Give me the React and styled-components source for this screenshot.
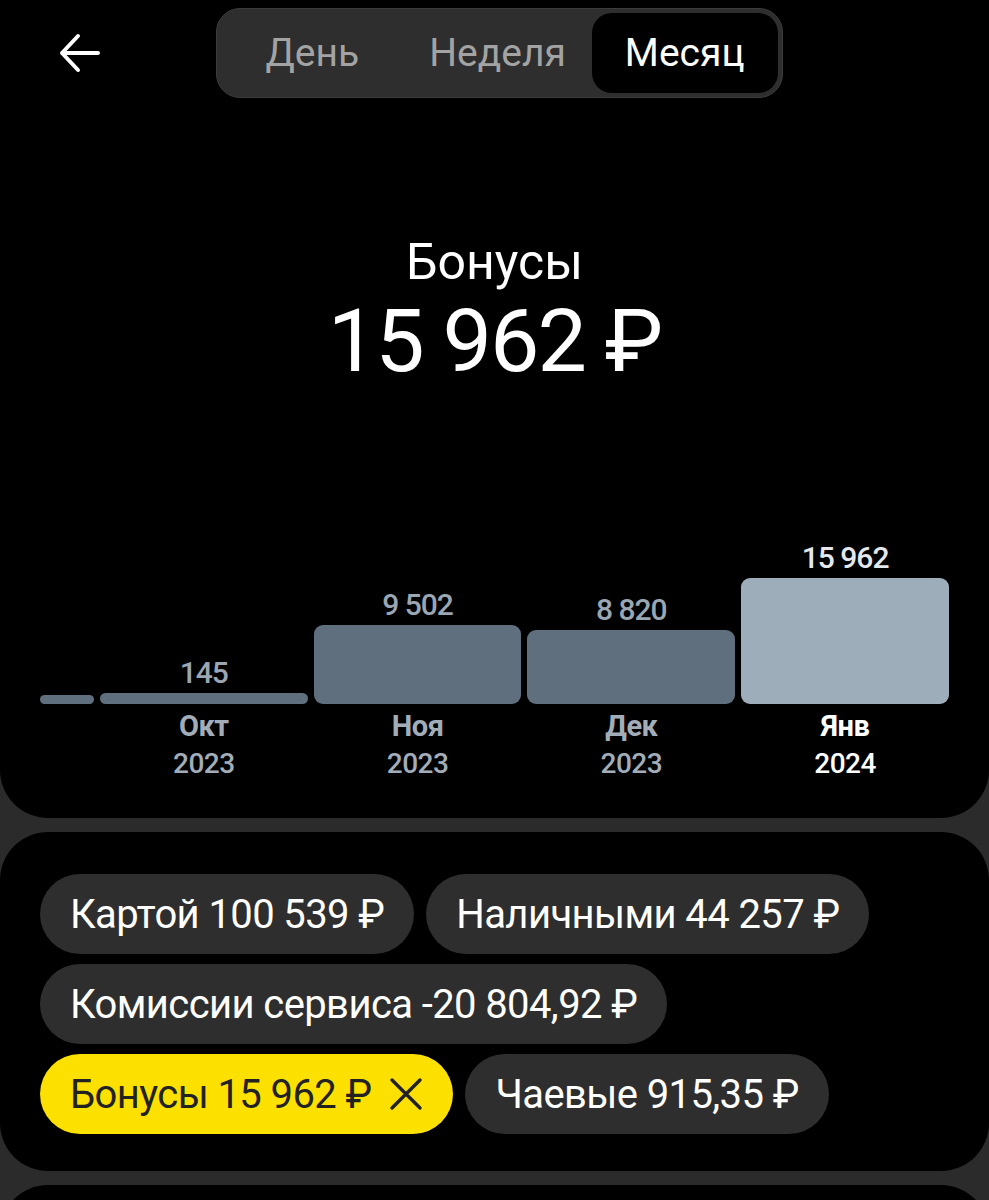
import React from 'react'
import styled, { createGlobalStyle } from 'styled-components'

const GlobalStyle = createGlobalStyle`
    body {
        margin: 0;
        background: #2b2b2b;
        font-family: Roboto, "Noto Sans", "DejaVu Sans", sans-serif;
        color: #fff;
    }
`

const Page = styled.div`
    display: flex;
    flex-direction: column;
    gap: 14px;
    width: 989px;
    height: 1200px;
    overflow: hidden;
`

const TopPanel = styled.section`
    background: #000;
    border-radius: 0 0 48px 48px;
    padding: 8px 40px 38px;
`

const Header = styled.header`
    display: grid;
    grid-template-columns: 1fr auto 1fr;
    align-items: center;
`

const BackButton = styled.button`
    justify-self: start;
    display: flex;
    align-items: center;
    justify-content: center;
    width: 50px;
    height: 50px;
    margin-left: 15px;
    padding: 0;
    background: none;
    border: none;
    color: #fff;
`

const Segmented = styled.div`
    display: flex;
    gap: 4px;
    margin-left: 10px;
    padding: 4px;
    background: #2e2e2e;
    border: 1.5px solid #3c3c3c;
    border-radius: 24px;
`

const Segment = styled.button`
    height: 80px;
    padding: 0 ${p => p.$pad}px;
    border: none;
    border-radius: 20px;
    background: ${p => (p.$active ? '#000' : 'transparent')};
    color: ${p => (p.$active ? '#fff' : '#a3a3a3')};
    font-family: inherit;
    font-size: 39px;
    font-weight: 400;
`

const Summary = styled.div`
    display: flex;
    flex-direction: column;
    align-items: center;
    margin-top: 134px;
`

const SummaryLabel = styled.div`
    font-size: 50px;
    line-height: 60px;
`

const SummaryValue = styled.div`
    font-size: 88px;
    line-height: 97px;
    letter-spacing: -2px;
`

const Chart = styled.div`
    display: flex;
    gap: 6px;
    margin-top: 135px;
`

const Column = styled.div`
    display: flex;
    flex-direction: column;
    align-items: center;
    width: ${p => p.$width}px;
`

const BarArea = styled.div`
    display: flex;
    flex-direction: column;
    justify-content: flex-end;
    align-items: center;
    width: 100%;
    height: 180px;
`

const BarValue = styled.div`
    margin-bottom: 2px;
    font-size: 30px;
    line-height: 36px;
    font-weight: 500;
    letter-spacing: -1px;
    color: ${p => (p.$current ? '#e4e8ec' : '#9aa6b2')};
`

const Bar = styled.div`
    width: 100%;
    border-radius: 9px;
    background: ${p => (p.$current ? '#9eadba' : '#5f6f7e')};
`

const Month = styled.div`
    margin-top: 5px;
    font-size: 29px;
    line-height: 34px;
    font-weight: 700;
    letter-spacing: -0.5px;
    color: ${p => (p.$current ? '#fff' : '#a3adb8')};
`

const Year = styled.div`
    margin-top: 5px;
    font-size: 28px;
    line-height: 32px;
    font-weight: 500;
    letter-spacing: -0.5px;
    color: ${p => (p.$current ? '#fff' : '#a3adb8')};
`

const Panel = styled.section`
    background: #000;
    border-radius: 48px;
    padding: 42px 40px 37px;
`

const ChipList = styled.div`
    display: flex;
    flex-wrap: wrap;
    gap: 10px 12px;
`

const Chip = styled.button`
    display: flex;
    align-items: center;
    gap: 18px;
    height: 80px;
    padding: 0 30px;
    border: none;
    border-radius: 40px;
    background: ${p => (p.$active ? '#fce000' : '#2e2e2e')};
    color: ${p => (p.$active ? '#222' : '#fff')};
    font-family: inherit;
    font-size: 40px;
    font-weight: 400;
    letter-spacing: -0.6px;
    white-space: nowrap;
`

const NextPanel = styled.section`
    background: #000;
    border-radius: 48px 48px 0 0;
    height: 200px;
    flex-shrink: 0;
`

const ArrowLeft = () => (
    <svg width="44" height="40" viewBox="0 0 44 40" fill="none" stroke="currentColor" strokeWidth="4" strokeLinecap="round" strokeLinejoin="round">
        <path d="M40 20H4M20 3L4 20l16 17" />
    </svg>
)

const CloseIcon = () => (
    <svg width="34" height="34" viewBox="0 0 34 34" fill="none" stroke="currentColor" strokeWidth="3.4" strokeLinecap="round">
        <path d="M3 3l28 28M31 3L3 31" />
    </svg>
)

const NB = '\u00A0'

const months = [
    { value: 145, month: 'Окт', year: '2023' },
    { value: 9502, month: 'Ноя', year: '2023' },
    { value: 8820, month: 'Дек', year: '2023' },
    { value: 15962, month: 'Янв', year: '2024', current: true },
]

const formatNumber = (n) => String(n).replace(/\B(?=(\d{3})+(?!\d))/g, NB)

// bar height: small base plus value scale
const barHeight = (v) => 10 + v * 0.00728

const chips = [
    { label: `Картой 100${NB}539${NB}₽` },
    { label: `Наличными 44${NB}257${NB}₽` },
    { label: `Комиссии сервиса -20${NB}804,92${NB}₽` },
    { label: `Бонусы 15${NB}962${NB}₽`, active: true },
    { label: `Чаевые 915,35${NB}₽` },
]

const App = () => {
    return (
        <>
            <GlobalStyle />
            <Page>
                <TopPanel>
                    <Header>
                        <BackButton aria-label="Назад">
                            <ArrowLeft />
                        </BackButton>
                        <Segmented>
                            <Segment $pad={44}>День</Segment>
                            <Segment $pad={22}>Неделя</Segment>
                            <Segment $pad={33} $active>Месяц</Segment>
                        </Segmented>
                    </Header>

                    <Summary>
                        <SummaryLabel>Бонусы</SummaryLabel>
                        <SummaryValue>15{NB}962{NB}₽</SummaryValue>
                    </Summary>

                    <Chart>
                        <Column $width={54}>
                            <BarArea>
                                <Bar style={{ height: 9 }} />
                            </BarArea>
                        </Column>
                        {months.map((m) => (
                            <Column key={m.month} $width={208}>
                                <BarArea>
                                    <BarValue $current={m.current}>{formatNumber(m.value)}</BarValue>
                                    <Bar $current={m.current} style={{ height: barHeight(m.value) }} />
                                </BarArea>
                                <Month $current={m.current}>{m.month}</Month>
                                <Year $current={m.current}>{m.year}</Year>
                            </Column>
                        ))}
                    </Chart>
                </TopPanel>

                <Panel>
                    <ChipList>
                        {chips.map((c) => (
                            <Chip key={c.label} $active={c.active}>
                                {c.label}
                                {c.active && <CloseIcon />}
                            </Chip>
                        ))}
                    </ChipList>
                </Panel>

                <NextPanel />
            </Page>
        </>
    )
}

export default App
